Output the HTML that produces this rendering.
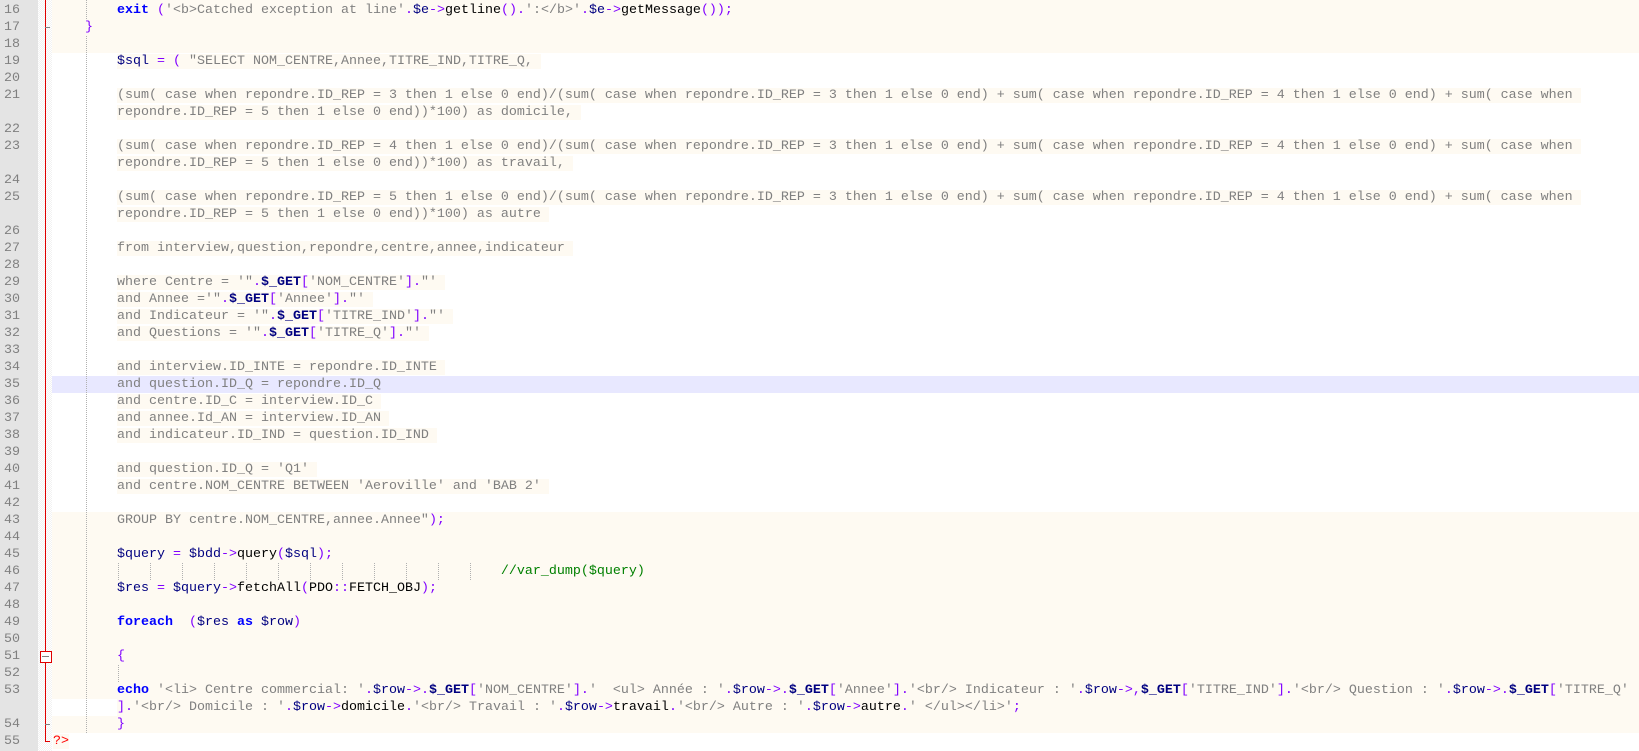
<!DOCTYPE html>
<html><head><meta charset="utf-8">
<style>
html,body{margin:0;padding:0;width:1639px;height:751px;overflow:hidden;background:#fff;position:relative}
.gut{position:absolute;left:0;top:0;width:38px;height:751px;background:#e4e4e4}
.fold{position:absolute;left:38px;top:0;width:14px;height:751px;background:repeating-conic-gradient(#f2f2f2 0 25%,#fff 0 50%) 0 0/2px 2px}
.red{position:absolute;left:45px;top:0;width:1px;height:742px;background:#e00000}
.r{position:absolute;left:0;height:17px;width:1639px}
.n{position:absolute;left:0;width:20px;text-align:right;font:13.33px/17px "Liberation Mono",monospace;color:#808080}
.t{position:absolute;left:53px;top:0;margin:0;font:13.33px/17px "Liberation Mono",monospace;white-space:pre;tab-size:4;-moz-tab-size:4;color:#000}
.cr{background:#fefaf2}
.k{color:#0000ff;font-weight:bold}
.v{color:#000080}
.o{color:#8000ff}
.s{color:#808080}
.g{color:#000080;font-weight:bold}
.c{color:#008000}
.guide{position:absolute;width:0;border-left:1px dotted #b0b0b0}
</style></head><body>
<div class="gut"></div>
<div class="fold"></div>
<div class="red"></div>
<div style="position:absolute;left:52px;top:376px;width:1587px;height:17px;background:#e8e8ff"></div>
<div style="position:absolute;left:52px;top:0;width:1587px;height:53px;background:#fefaf2"></div>
<div style="position:absolute;left:52px;top:512px;width:1587px;height:221px;background:#fefaf2"></div>
<div style="position:absolute;left:52px;top:699px;width:65px;height:17px;background:#fff"></div>
<!-- indent guides -->
<div class="guide" style="left:86px;top:0;height:19px"></div>
<div class="guide" style="left:86px;top:36px;height:697px"></div>
<div class="guide" style="left:118px;top:665px;height:17px"></div>
<div class="guide" style="left:118px;top:563px;height:17px"></div>
<div class="guide" style="left:150px;top:563px;height:17px"></div>
<div class="guide" style="left:182px;top:563px;height:17px"></div>
<div class="guide" style="left:214px;top:563px;height:17px"></div>
<div class="guide" style="left:246px;top:563px;height:17px"></div>
<div class="guide" style="left:278px;top:563px;height:17px"></div>
<div class="guide" style="left:310px;top:563px;height:17px"></div>
<div class="guide" style="left:342px;top:563px;height:17px"></div>
<div class="guide" style="left:374px;top:563px;height:17px"></div>
<div class="guide" style="left:406px;top:563px;height:17px"></div>
<div class="guide" style="left:438px;top:563px;height:17px"></div>
<div class="guide" style="left:470px;top:563px;height:17px"></div>
<!-- fold marks -->
<div style="position:absolute;left:45px;top:27px;width:5px;height:1px;background:#808080"></div>
<div style="position:absolute;left:45px;top:724px;width:5px;height:1px;background:#808080"></div>
<div style="position:absolute;left:45px;top:741px;width:5px;height:1px;background:#e00000"></div>
<div style="position:absolute;left:40px;top:651px;width:10px;height:10px;border:1px solid #e00000;background:#fff"></div>
<div style="position:absolute;left:42px;top:656px;width:7px;height:1px;background:#808080"></div>

<div class="r" style="top:2px"><span class="n">16</span><pre class="t">		<span class="k">exit</span> <span class="o">(</span><span class="s">'&lt;b&gt;Catched exception at line'</span><span class="o">.</span><span class="v">$e</span><span class="o">-&gt;</span>getline<span class="o">().</span><span class="s">':&lt;/b&gt;'</span><span class="o">.</span><span class="v">$e</span><span class="o">-&gt;</span>getMessage<span class="o">());</span></pre></div>
<div class="r" style="top:19px"><span class="n">17</span><pre class="t">	<span class="o">}</span></pre></div>
<div class="r" style="top:36px"><span class="n">18</span></div>
<div class="r" style="top:53px"><span class="n">19</span><pre class="t">		<span class="cr"><span class="v">$sql</span> <span class="o">=</span> <span class="o">(</span> <span class="s">"SELECT NOM_CENTRE,Annee,TITRE_IND,TITRE_Q, </span></span></pre></div>
<div class="r" style="top:70px"><span class="n">20</span></div>
<div class="r" style="top:87px"><span class="n">21</span><pre class="t s">		<span class="cr">(sum( case when repondre.ID_REP = 3 then 1 else 0 end)/(sum( case when repondre.ID_REP = 3 then 1 else 0 end) + sum( case when repondre.ID_REP = 4 then 1 else 0 end) + sum( case when </span></pre></div>
<div class="r" style="top:104px"><pre class="t s">		<span class="cr">repondre.ID_REP = 5 then 1 else 0 end))*100) as domicile, </span></pre></div>
<div class="r" style="top:121px"><span class="n">22</span></div>
<div class="r" style="top:138px"><span class="n">23</span><pre class="t s">		<span class="cr">(sum( case when repondre.ID_REP = 4 then 1 else 0 end)/(sum( case when repondre.ID_REP = 3 then 1 else 0 end) + sum( case when repondre.ID_REP = 4 then 1 else 0 end) + sum( case when </span></pre></div>
<div class="r" style="top:155px"><pre class="t s">		<span class="cr">repondre.ID_REP = 5 then 1 else 0 end))*100) as travail, </span></pre></div>
<div class="r" style="top:172px"><span class="n">24</span></div>
<div class="r" style="top:189px"><span class="n">25</span><pre class="t s">		<span class="cr">(sum( case when repondre.ID_REP = 5 then 1 else 0 end)/(sum( case when repondre.ID_REP = 3 then 1 else 0 end) + sum( case when repondre.ID_REP = 4 then 1 else 0 end) + sum( case when </span></pre></div>
<div class="r" style="top:206px"><pre class="t s">		<span class="cr">repondre.ID_REP = 5 then 1 else 0 end))*100) as autre </span></pre></div>
<div class="r" style="top:223px"><span class="n">26</span></div>
<div class="r" style="top:240px"><span class="n">27</span><pre class="t s">		<span class="cr">from interview,question,repondre,centre,annee,indicateur </span></pre></div>
<div class="r" style="top:257px"><span class="n">28</span></div>
<div class="r" style="top:274px"><span class="n">29</span><pre class="t s">		<span class="cr">where Centre = '"<span class="o">.</span><span class="g">$_GET</span><span class="o">[</span>'NOM_CENTRE'<span class="o">].</span>"' </span></pre></div>
<div class="r" style="top:291px"><span class="n">30</span><pre class="t s">		<span class="cr">and Annee ='"<span class="o">.</span><span class="g">$_GET</span><span class="o">[</span>'Annee'<span class="o">].</span>"' </span></pre></div>
<div class="r" style="top:308px"><span class="n">31</span><pre class="t s">		<span class="cr">and Indicateur = '"<span class="o">.</span><span class="g">$_GET</span><span class="o">[</span>'TITRE_IND'<span class="o">].</span>"' </span></pre></div>
<div class="r" style="top:325px"><span class="n">32</span><pre class="t s">		<span class="cr">and Questions = '"<span class="o">.</span><span class="g">$_GET</span><span class="o">[</span>'TITRE_Q'<span class="o">].</span>"' </span></pre></div>
<div class="r" style="top:342px"><span class="n">33</span></div>
<div class="r" style="top:359px"><span class="n">34</span><pre class="t s">		<span class="cr">and interview.ID_INTE = repondre.ID_INTE </span></pre></div>
<div class="r" style="top:376px"><span class="n">35</span><pre class="t s">		and question.ID_Q = repondre.ID_Q</pre></div>
<div class="r" style="top:393px"><span class="n">36</span><pre class="t s">		<span class="cr">and centre.ID_C = interview.ID_C </span></pre></div>
<div class="r" style="top:410px"><span class="n">37</span><pre class="t s">		<span class="cr">and annee.Id_AN = interview.ID_AN </span></pre></div>
<div class="r" style="top:427px"><span class="n">38</span><pre class="t s">		<span class="cr">and indicateur.ID_IND = question.ID_IND </span></pre></div>
<div class="r" style="top:444px"><span class="n">39</span></div>
<div class="r" style="top:461px"><span class="n">40</span><pre class="t s">		<span class="cr">and question.ID_Q = 'Q1' </span></pre></div>
<div class="r" style="top:478px"><span class="n">41</span><pre class="t s">		<span class="cr">and centre.NOM_CENTRE BETWEEN 'Aeroville' and 'BAB 2' </span></pre></div>
<div class="r" style="top:495px"><span class="n">42</span></div>
<div class="r" style="top:512px"><span class="n">43</span><pre class="t s">		GROUP BY centre.NOM_CENTRE,annee.Annee"<span class="o">);</span></pre></div>
<div class="r" style="top:529px"><span class="n">44</span></div>
<div class="r" style="top:546px"><span class="n">45</span><pre class="t">		<span class="v">$query</span> <span class="o">=</span> <span class="v">$bdd</span><span class="o">-&gt;</span>query<span class="o">(</span><span class="v">$sql</span><span class="o">);</span></pre></div>
<div class="r" style="top:563px"><span class="n">46</span><pre class="t">														<span class="c">//var_dump($query)</span></pre></div>
<div class="r" style="top:580px"><span class="n">47</span><pre class="t">		<span class="v">$res</span> <span class="o">=</span> <span class="v">$query</span><span class="o">-&gt;</span>fetchAll<span class="o">(</span>PDO<span class="o">::</span>FETCH_OBJ<span class="o">);</span></pre></div>
<div class="r" style="top:597px"><span class="n">48</span></div>
<div class="r" style="top:614px"><span class="n">49</span><pre class="t">		<span class="k">foreach</span>  <span class="o">(</span><span class="v">$res</span> <span class="k">as</span> <span class="v">$row</span><span class="o">)</span></pre></div>
<div class="r" style="top:631px"><span class="n">50</span></div>
<div class="r" style="top:648px"><span class="n">51</span><pre class="t">		<span class="o">{</span></pre></div>
<div class="r" style="top:665px"><span class="n">52</span></div>
<div class="r" style="top:682px"><span class="n">53</span><pre class="t">		<span class="k">echo</span> <span class="s">'&lt;li&gt; Centre commercial: '</span><span class="o">.</span><span class="v">$row</span><span class="o">-&gt;.</span><span class="g">$_GET</span><span class="o">[</span><span class="s">'NOM_CENTRE'</span><span class="o">].</span><span class="s">'  &lt;ul&gt; Année : '</span><span class="o">.</span><span class="v">$row</span><span class="o">-&gt;.</span><span class="g">$_GET</span><span class="o">[</span><span class="s">'Annee'</span><span class="o">].</span><span class="s">'&lt;br/&gt; Indicateur : '</span><span class="o">.</span><span class="v">$row</span><span class="o">-&gt;,</span><span class="g">$_GET</span><span class="o">[</span><span class="s">'TITRE_IND'</span><span class="o">].</span><span class="s">'&lt;br/&gt; Question : '</span><span class="o">.</span><span class="v">$row</span><span class="o">-&gt;.</span><span class="g">$_GET</span><span class="o">[</span><span class="s">'TITRE_Q'</span></pre></div>
<div class="r" style="top:699px"><pre class="t">		<span class="o">].</span><span class="s">'&lt;br/&gt; Domicile : '</span><span class="o">.</span><span class="v">$row</span><span class="o">-&gt;</span>domicile<span class="o">.</span><span class="s">'&lt;br/&gt; Travail : '</span><span class="o">.</span><span class="v">$row</span><span class="o">-&gt;</span>travail<span class="o">.</span><span class="s">'&lt;br/&gt; Autre : '</span><span class="o">.</span><span class="v">$row</span><span class="o">-&gt;</span>autre<span class="o">.</span><span class="s">' &lt;/ul&gt;&lt;/li&gt;'</span><span class="o">;</span></pre></div>
<div class="r" style="top:716px"><span class="n">54</span><pre class="t">		<span class="o">}</span></pre></div>
<div class="r" style="top:733px"><span class="n">55</span><pre class="t"><span class="cr" style="color:#ff0000">?&gt;</span></pre></div>
</body></html>
